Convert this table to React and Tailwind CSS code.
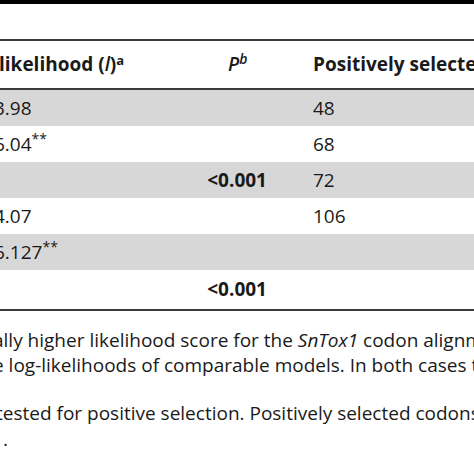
const rows = [
  { lik: "3.98", star: false, p: "", sel: "48", shade: true },
  { lik: "6.04", star: true, p: "", sel: "68", shade: false },
  { lik: "", p: "<0.001", sel: "72", shade: true },
  { lik: "4.07", star: false, p: "", sel: "106", shade: false },
  { lik: "6.127", star: true, p: "", sel: "", shade: true },
  { lik: "", p: "<0.001", sel: "", shade: false, last: true },
];

export default function App() {
  return (
    <div
      className="h-[474px] w-[474px] overflow-hidden bg-white text-[#1a1a1a]"
      style={{ fontFamily: "'Open Sans', 'Noto Sans', sans-serif" }}
    >
      <div className="h-[4px] bg-black" />
      <div className="h-[35px]" />
      <div className="h-[2px] bg-[#3a3a3a]" />

      {/* header */}
      <div className="flex h-[47px] items-center whitespace-nowrap text-[19px] font-bold">
        <div className="w-[200px] shrink-0 overflow-hidden">
          <span className="ml-[-1px] inline-block">
            likelihood (<span className="font-semibold italic">l</span>)
            <sup className="text-[13px]">a</sup>
          </span>
        </div>
        <div className="w-[113px] shrink-0 pl-[28px] font-semibold italic">
          P<sup className="text-[14px]">b</sup>
        </div>
        <div className="min-w-0 flex-1">Positively selected</div>
      </div>
      <div className="h-[2px] bg-[#3a3a3a]" />

      {rows.map((r, i) => (
        <div
          key={i}
          className={`flex items-center whitespace-nowrap text-[19px] ${
            r.shade ? "bg-[#d7d7d7]" : "bg-white"
          } ${r.last ? "h-[39px]" : "h-[36px]"}`}
        >
          <div className="w-[200px] shrink-0 overflow-hidden">
            {r.lik && (
              <span className="ml-[-6px] inline-block">
                {r.lik}
                {r.star && <sup className="text-[14px]">**</sup>}
              </span>
            )}
          </div>
          <div className="w-[67px] shrink-0 text-right font-bold">{r.p}</div>
          <div className="w-[46px] shrink-0" />
          <div className="min-w-0 flex-1">{r.sel}</div>
        </div>
      ))}
      <div className="h-[2px] bg-[#3a3a3a]" />

      {/* footnotes */}
      <div className="mt-[17px] whitespace-nowrap text-[19px] leading-[25px]">
        <div className="ml-[-7px]">
          ally higher likelihood score for the <span className="italic">SnTox1</span> codon alignment
        </div>
        <div className="ml-[-7px]">
          e log-likelihoods of comparable models. In both cases the
        </div>
        <div className="mt-[23px] ml-[-4px]">
          tested for positive selection. Positively selected codons for
        </div>
        <div className="ml-[3px] leading-[26px]">.</div>
      </div>
    </div>
  );
}
